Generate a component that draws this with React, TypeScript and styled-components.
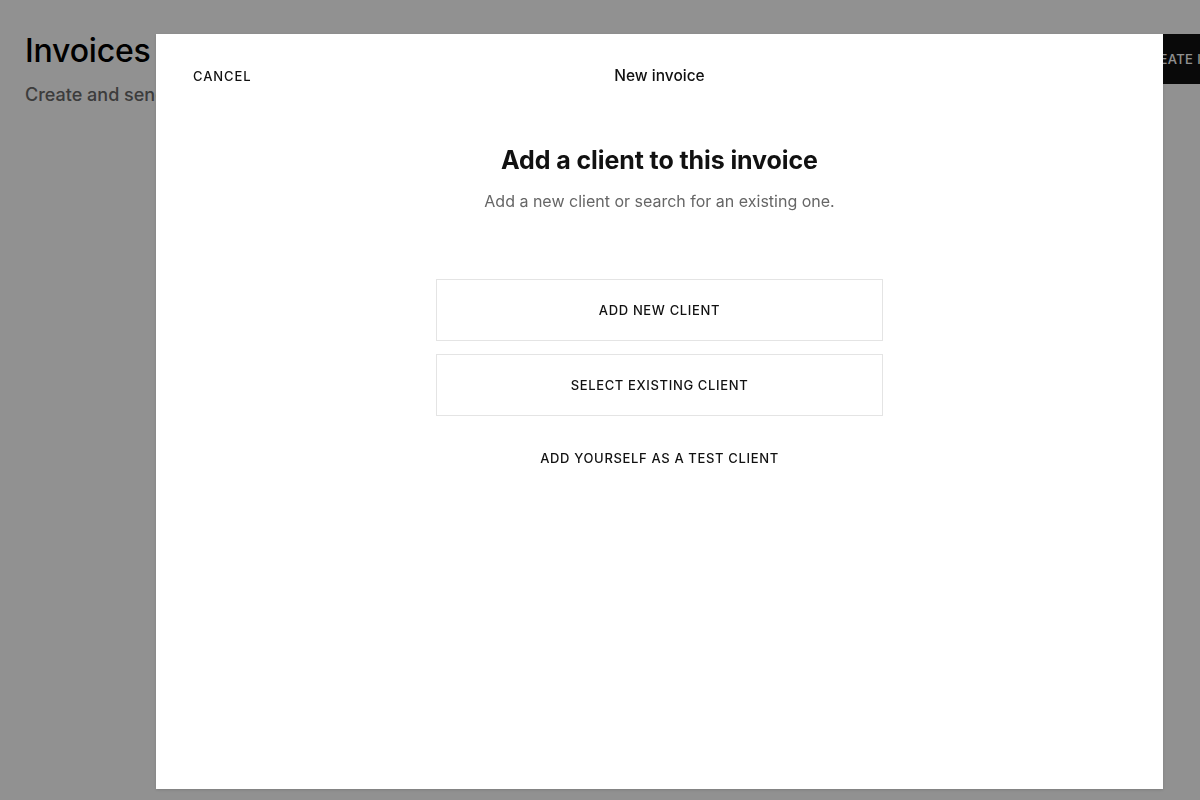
import React from 'react';
import styled, { createGlobalStyle } from 'styled-components';

const GlobalStyle = createGlobalStyle`
  html, body {
    margin: 0;
    padding: 0;
    height: 100%;
    overflow: hidden;
    background: #fff;
  }
  body {
    font-family: Inter, "Liberation Sans", Arial, sans-serif;
    color: #111;
  }
  * {
    box-sizing: border-box;
  }
`;

const Page = styled.div`
  width: 1277px;
  height: 800px;
`;

const PageHeader = styled.header`
  display: flex;
  justify-content: space-between;
  align-items: flex-start;
  padding: 34px 0 0 25px;
`;

const TitleBlock = styled.div`
  display: flex;
  flex-direction: column;
`;

const PageTitle = styled.h1`
  margin: 0;
  font-size: 32px;
  font-weight: 500;
  line-height: 34px;
  color: #000;
  letter-spacing: -0.2px;
`;

const PageSubtitle = styled.p`
  margin: 16px 0 0;
  font-size: 18px;
  font-weight: 500;
  color: #6a6a6a;
`;

const CreateButton = styled.button`
  height: 50px;
  padding: 0 24px;
  border: none;
  background: #111;
  color: #fff;
  font-family: inherit;
  font-size: 13px;
  font-weight: 500;
  letter-spacing: 0.4px;
  text-transform: uppercase;
`;

const Overlay = styled.div`
  position: fixed;
  inset: 0;
  background: rgba(0, 0, 0, 0.43);
`;

const Modal = styled.div`
  position: fixed;
  left: 156px;
  top: 34px;
  width: 1007px;
  height: 755px;
  background: #fff;
  box-shadow: 0 1px 3px rgba(0, 0, 0, 0.15);
  display: flex;
  flex-direction: column;
`;

const ModalHeader = styled.div`
  display: grid;
  grid-template-columns: 1fr auto 1fr;
  align-items: center;
  padding: 30px 37px 0;
  line-height: 24px;
`;

const TextButton = styled.button`
  justify-self: start;
  padding: 0;
  border: none;
  background: none;
  font-family: inherit;
  font-size: 13px;
  font-weight: 500;
  letter-spacing: 0.9px;
  text-transform: uppercase;
  color: #111;
  cursor: pointer;
`;

const ModalTitle = styled.div`
  font-size: 15.5px;
  font-weight: 500;
  color: #111;
`;

const Body = styled.div`
  display: flex;
  flex-direction: column;
  align-items: center;
  padding-top: 56px;
`;

const Heading = styled.h2`
  margin: 0;
  font-size: 25px;
  line-height: 32px;
  font-weight: 700;
  letter-spacing: -0.1px;
  color: #111;
`;

const Lead = styled.p`
  margin: 15px 0 0;
  font-size: 16px;
  line-height: 20px;
  color: #666;
`;

const Options = styled.div`
  display: flex;
  flex-direction: column;
  align-items: center;
  gap: 13px;
  margin-top: 68px;
`;

const OptionButton = styled.button<{ $outlined?: boolean }>`
  width: 447px;
  height: ${(p) => (p.$outlined ? '62px' : '36px')};
  margin-top: ${(p) => (p.$outlined ? '0' : '11px')};
  border: ${(p) => (p.$outlined ? '1px solid #e4e4e4' : 'none')};
  background: #fff;
  font-family: inherit;
  font-size: 13px;
  font-weight: 500;
  letter-spacing: 0.65px;
  text-transform: uppercase;
  color: #111;
  cursor: pointer;
`;

export default function App() {
  return (
    <>
      <GlobalStyle />
      <Page>
        <PageHeader>
          <TitleBlock>
            <PageTitle>Invoices</PageTitle>
            <PageSubtitle>Create and send invoices to your clients.</PageSubtitle>
          </TitleBlock>
          <CreateButton>Create invoice</CreateButton>
        </PageHeader>
      </Page>
      <Overlay />
      <Modal>
        <ModalHeader>
          <TextButton>Cancel</TextButton>
          <ModalTitle>New invoice</ModalTitle>
        </ModalHeader>
        <Body>
          <Heading>Add a client to this invoice</Heading>
          <Lead>Add a new client or search for an existing one.</Lead>
          <Options>
            <OptionButton $outlined>Add new client</OptionButton>
            <OptionButton $outlined>Select existing client</OptionButton>
            <OptionButton>Add yourself as a test client</OptionButton>
          </Options>
        </Body>
      </Modal>
    </>
  );
}
